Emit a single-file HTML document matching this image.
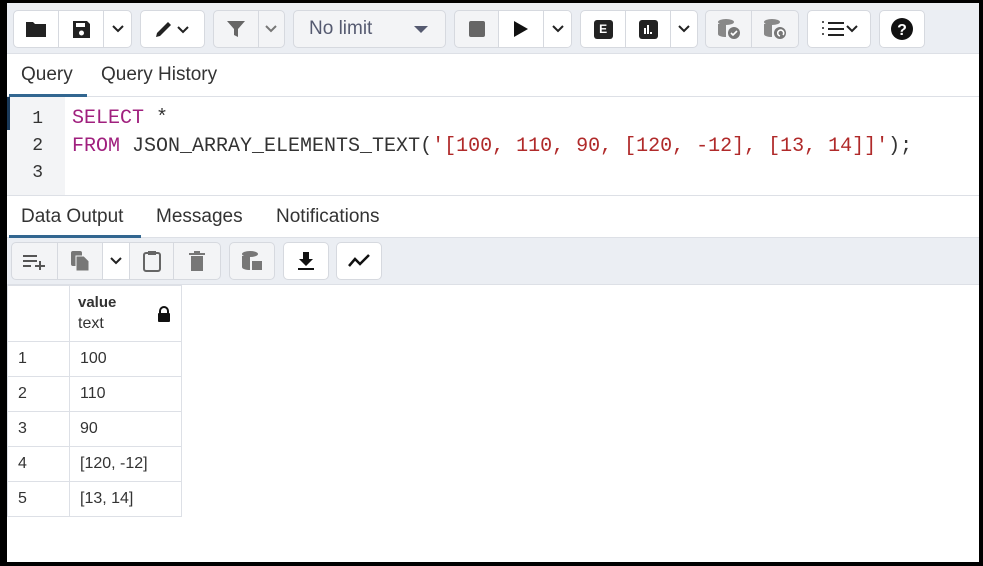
<!DOCTYPE html>
<html><head><meta charset="utf-8"><style>
*{box-sizing:border-box;margin:0;padding:0}
body{width:983px;height:566px;background:#000;position:relative;overflow:hidden;font-family:"Liberation Sans",sans-serif}
#app{position:absolute;left:7px;top:3px;width:972px;height:559px;background:#fff;overflow:hidden}
.tb{position:absolute;left:0;top:0;width:972px;height:51px;background:#ebeef3;border-bottom:1px solid #dde0e6}
.g{position:absolute;top:7px;height:38px;border:1px solid #d6d9df;border-radius:5px;background:#fff;display:flex;overflow:hidden}
.g.gr{background:#f3f4f6}
.b{height:100%;border-right:1px solid #d6d9df;display:flex;align-items:center;justify-content:center}
.b:last-child{border-right:none}
.tabs{position:absolute;left:0;width:972px;height:43px;border-bottom:1px solid #dde0e6;font-size:19px;color:#333}
.tabs span{position:absolute;top:10px}
.ul{position:absolute;bottom:-1px;height:3px;background:#326690}
.code{position:absolute;top:94px;left:0;width:972px;height:98px}
.gut{position:absolute;left:0;top:0;width:58px;height:98px;background:#f3f4f6}
.ln{position:absolute;font-family:"Liberation Mono",monospace;font-size:18px;color:#333;width:36px;text-align:right}
.cl{position:absolute;left:65px;font-family:"Liberation Mono",monospace;font-size:20px;white-space:pre;color:#333}
.kw{color:#a0207e}.st{color:#b02a2a}
table{position:absolute;left:0;top:282px;border-collapse:collapse;font-size:16px;color:#333}
td{border:1px solid #dde0e6;height:35px;padding-left:10px}
</style></head><body><div id="app">
<div class="tb">
 <div class="g" style="left:6px;width:119px">
  <div class="b" style="width:46px"><svg width="22" height="18" viewBox="0 0 22 18"><path d="M1 2h7l2 2h11v13H1z" fill="#222"/></svg></div>
  <div class="b" style="width:46px"><svg width="19" height="19" viewBox="0 0 19 19"><path d="M1 1h14l3 3v14H1z" fill="#222"/><rect x="4" y="3" width="9" height="4" fill="#fff"/><circle cx="9.5" cy="13" r="2.5" fill="#fff"/></svg></div>
  <div class="b" style="width:27px"><svg width="12" height="8"><path d="M1 1l5 5 5-5" stroke="#222" stroke-width="2" fill="none"/></svg></div>
 </div>
 <div class="g" style="left:133px;width:65px"><div class="b" style="width:65px"><svg width="40" height="20"><path d="M3 18l4-1 11-11-3-3L4 14z" fill="#222"/><path d="M25 8l5 5 5-5" stroke="#222" stroke-width="2" fill="none"/></svg></div></div>
 <div class="g gr" style="left:206px;width:72px">
  <div class="b" style="width:46px"><svg width="20" height="18"><path d="M1 1h18l-7 8v8l-4-2V9z" fill="#666"/></svg></div>
  <div class="b" style="width:26px"><svg width="12" height="8"><path d="M1 1l5 5 5-5" stroke="#777" stroke-width="2" fill="none"/></svg></div>
 </div>
 <div class="g gr" style="left:286px;width:153px;align-items:center"><span style="margin-left:15px;font-size:19px;color:#555a70">No limit</span><svg style="position:absolute;right:17px;top:15px" width="14" height="8"><path d="M0 0h14L7 7z" fill="#555a70"/></svg></div>
 <div class="g gr" style="left:447px;width:118px">
  <div class="b" style="width:45px"><div style="width:16px;height:16px;background:#666;border-radius:2px"></div></div>
  <div class="b" style="width:46px;background:#fff"><svg width="16" height="18"><path d="M1 1l14 8-14 8z" fill="#111"/></svg></div>
  <div class="b" style="width:27px;background:#fff"><svg width="12" height="8"><path d="M1 1l5 5 5-5" stroke="#222" stroke-width="2" fill="none"/></svg></div>
 </div>
 <div class="g" style="left:573px;width:118px">
  <div class="b" style="width:46px"><div style="width:19px;height:19px;background:#222;border-radius:3px;color:#fff;font-size:12px;font-weight:bold;text-align:center;line-height:19px">E</div></div>
  <div class="b" style="width:46px"><svg width="19" height="19"><rect width="19" height="19" rx="3" fill="#222"/><path d="M6 14V8M9 14V5M12 14v-2" stroke="#fff" stroke-width="2"/></svg></div>
  <div class="b" style="width:26px"><svg width="12" height="8"><path d="M1 1l5 5 5-5" stroke="#222" stroke-width="2" fill="none"/></svg></div>
 </div>
 <div class="g gr" style="left:698px;width:94px">
  <div class="b" style="width:47px"><svg width="24" height="22"><ellipse cx="9" cy="4" rx="8" ry="3" fill="#888"/><path d="M1 6v10c0 2 4 3 8 3V6z" fill="#888"/><circle cx="17" cy="15" r="6" fill="#777"/><path d="M14 15l2 2 4-4" stroke="#fff" stroke-width="1.6" fill="none"/></svg></div>
  <div class="b" style="width:47px"><svg width="24" height="22"><ellipse cx="9" cy="4" rx="8" ry="3" fill="#888"/><path d="M1 6v10c0 2 4 3 8 3V6z" fill="#888"/><circle cx="17" cy="15" r="6" fill="#777"/><path d="M20 17a3 3 0 1 0-3 1" stroke="#fff" stroke-width="1.6" fill="none"/></svg></div>
 </div>
 <div class="g" style="left:800px;width:64px"><div class="b" style="width:64px"><svg width="38" height="20"><path d="M8 4h16M8 10h16M8 16h16" stroke="#222" stroke-width="2"/><path d="M2 3h2M2 9h2M2 15h2" stroke="#222" stroke-width="1.5"/><path d="M27 7l5 5 5-5" stroke="#222" stroke-width="2" fill="none"/></svg></div></div>
 <div class="g" style="left:872px;width:46px"><div class="b" style="width:46px"><svg width="22" height="22"><circle cx="11" cy="11" r="11" fill="#111"/><text x="11" y="17" text-anchor="middle" font-size="16" font-weight="bold" fill="#fff" font-family="Liberation Sans">?</text></svg></div></div>
</div>
<div class="tabs" style="top:51px"><span style="left:14px">Query</span><span style="left:94px">Query History</span><div class="ul" style="left:2px;width:78px"></div></div>
<div class="code">
 <div class="gut"></div><div style="position:absolute;left:0;top:0;width:3px;height:33px;background:#1a3a5a"></div>
 <div class="ln" style="top:12px">1</div><div class="ln" style="top:39px">2</div><div class="ln" style="top:66px">3</div>
 <div class="cl" style="top:10px"><span class="kw">SELECT</span> *</div>
 <div class="cl" style="top:38px"><span class="kw">FROM</span> JSON_ARRAY_ELEMENTS_TEXT(<span class="st">'[100, 110, 90, [120, -12], [13, 14]]'</span>);</div>
</div>
<div class="tabs" style="top:192px;border-top:1px solid #dde0e6"><span style="left:14px">Data Output</span><span style="left:149px">Messages</span><span style="left:269px">Notifications</span><div class="ul" style="left:2px;width:132px"></div></div>
<div style="position:absolute;top:235px;left:0;width:972px;height:47px;background:#ebeef3;border-bottom:1px solid #dde0e6">
 <div class="g gr" style="left:4px;top:4px;width:210px">
  <div class="b" style="width:46px"><svg width="26" height="18"><path d="M2 4h14M2 9h14M2 14h8M14 14h10M19 9v10" stroke="#555" stroke-width="2"/></svg></div>
  <div class="b" style="width:46px"><svg width="20" height="22"><rect x="1" y="1" width="11" height="15" rx="2" fill="#777"/><path d="M6 6h8l5 5v10H6z" fill="#777" stroke="#f3f4f6"/></svg></div>
  <div class="b" style="width:27px;background:#fff"><svg width="12" height="8"><path d="M1 1l5 5 5-5" stroke="#222" stroke-width="2" fill="none"/></svg></div>
  <div class="b" style="width:45px"><svg width="18" height="22"><rect x="1" y="3" width="16" height="18" rx="2" fill="none" stroke="#666" stroke-width="2"/><rect x="5" y="1" width="8" height="4" fill="#666"/></svg></div>
  <div class="b" style="width:46px"><svg width="16" height="20"><path d="M0 3h16M5 1h6" stroke="#777" stroke-width="2"/><path d="M2 5h12v15H2z" fill="#777"/></svg></div>
 </div>
 <div class="g gr" style="left:222px;top:4px;width:46px"><div class="b" style="width:46px"><svg width="22" height="22"><ellipse cx="9" cy="4" rx="8" ry="3" fill="#777"/><path d="M1 6v11c0 2 4 3 8 3V6z" fill="#777"/><rect x="11" y="11" width="10" height="9" fill="#777"/></svg></div></div>
 <div class="g" style="left:276px;top:4px;width:46px"><div class="b" style="width:46px"><svg width="18" height="20"><path d="M6 1h6v7h4l-7 7-7-7h4z" fill="#111"/><path d="M1 18h16" stroke="#111" stroke-width="2"/></svg></div></div>
 <div class="g" style="left:329px;top:4px;width:46px"><div class="b" style="width:46px"><svg width="24" height="16"><path d="M2 13l6-7 5 5 9-9" stroke="#111" stroke-width="2.5" fill="none"/></svg></div></div>
</div>
<table>
 <tr><td style="width:62px;height:56px"></td><td style="width:112px;position:relative;padding-left:8px"><div style="font-weight:bold;font-size:15px;line-height:20px">value</div><div style="font-size:16px;line-height:22px">text</div><svg style="position:absolute;right:10px;top:20px" width="14" height="16"><path d="M3 7V5a4 4 0 0 1 8 0v2" stroke="#111" stroke-width="2" fill="none"/><rect x="1" y="7" width="12" height="9" rx="1" fill="#111"/></svg></td></tr>
 <tr><td>1</td><td>100</td></tr>
 <tr><td>2</td><td>110</td></tr>
 <tr><td>3</td><td>90</td></tr>
 <tr><td>4</td><td>[120, -12]</td></tr>
 <tr><td>5</td><td>[13, 14]</td></tr>
</table>
</div></body></html>
